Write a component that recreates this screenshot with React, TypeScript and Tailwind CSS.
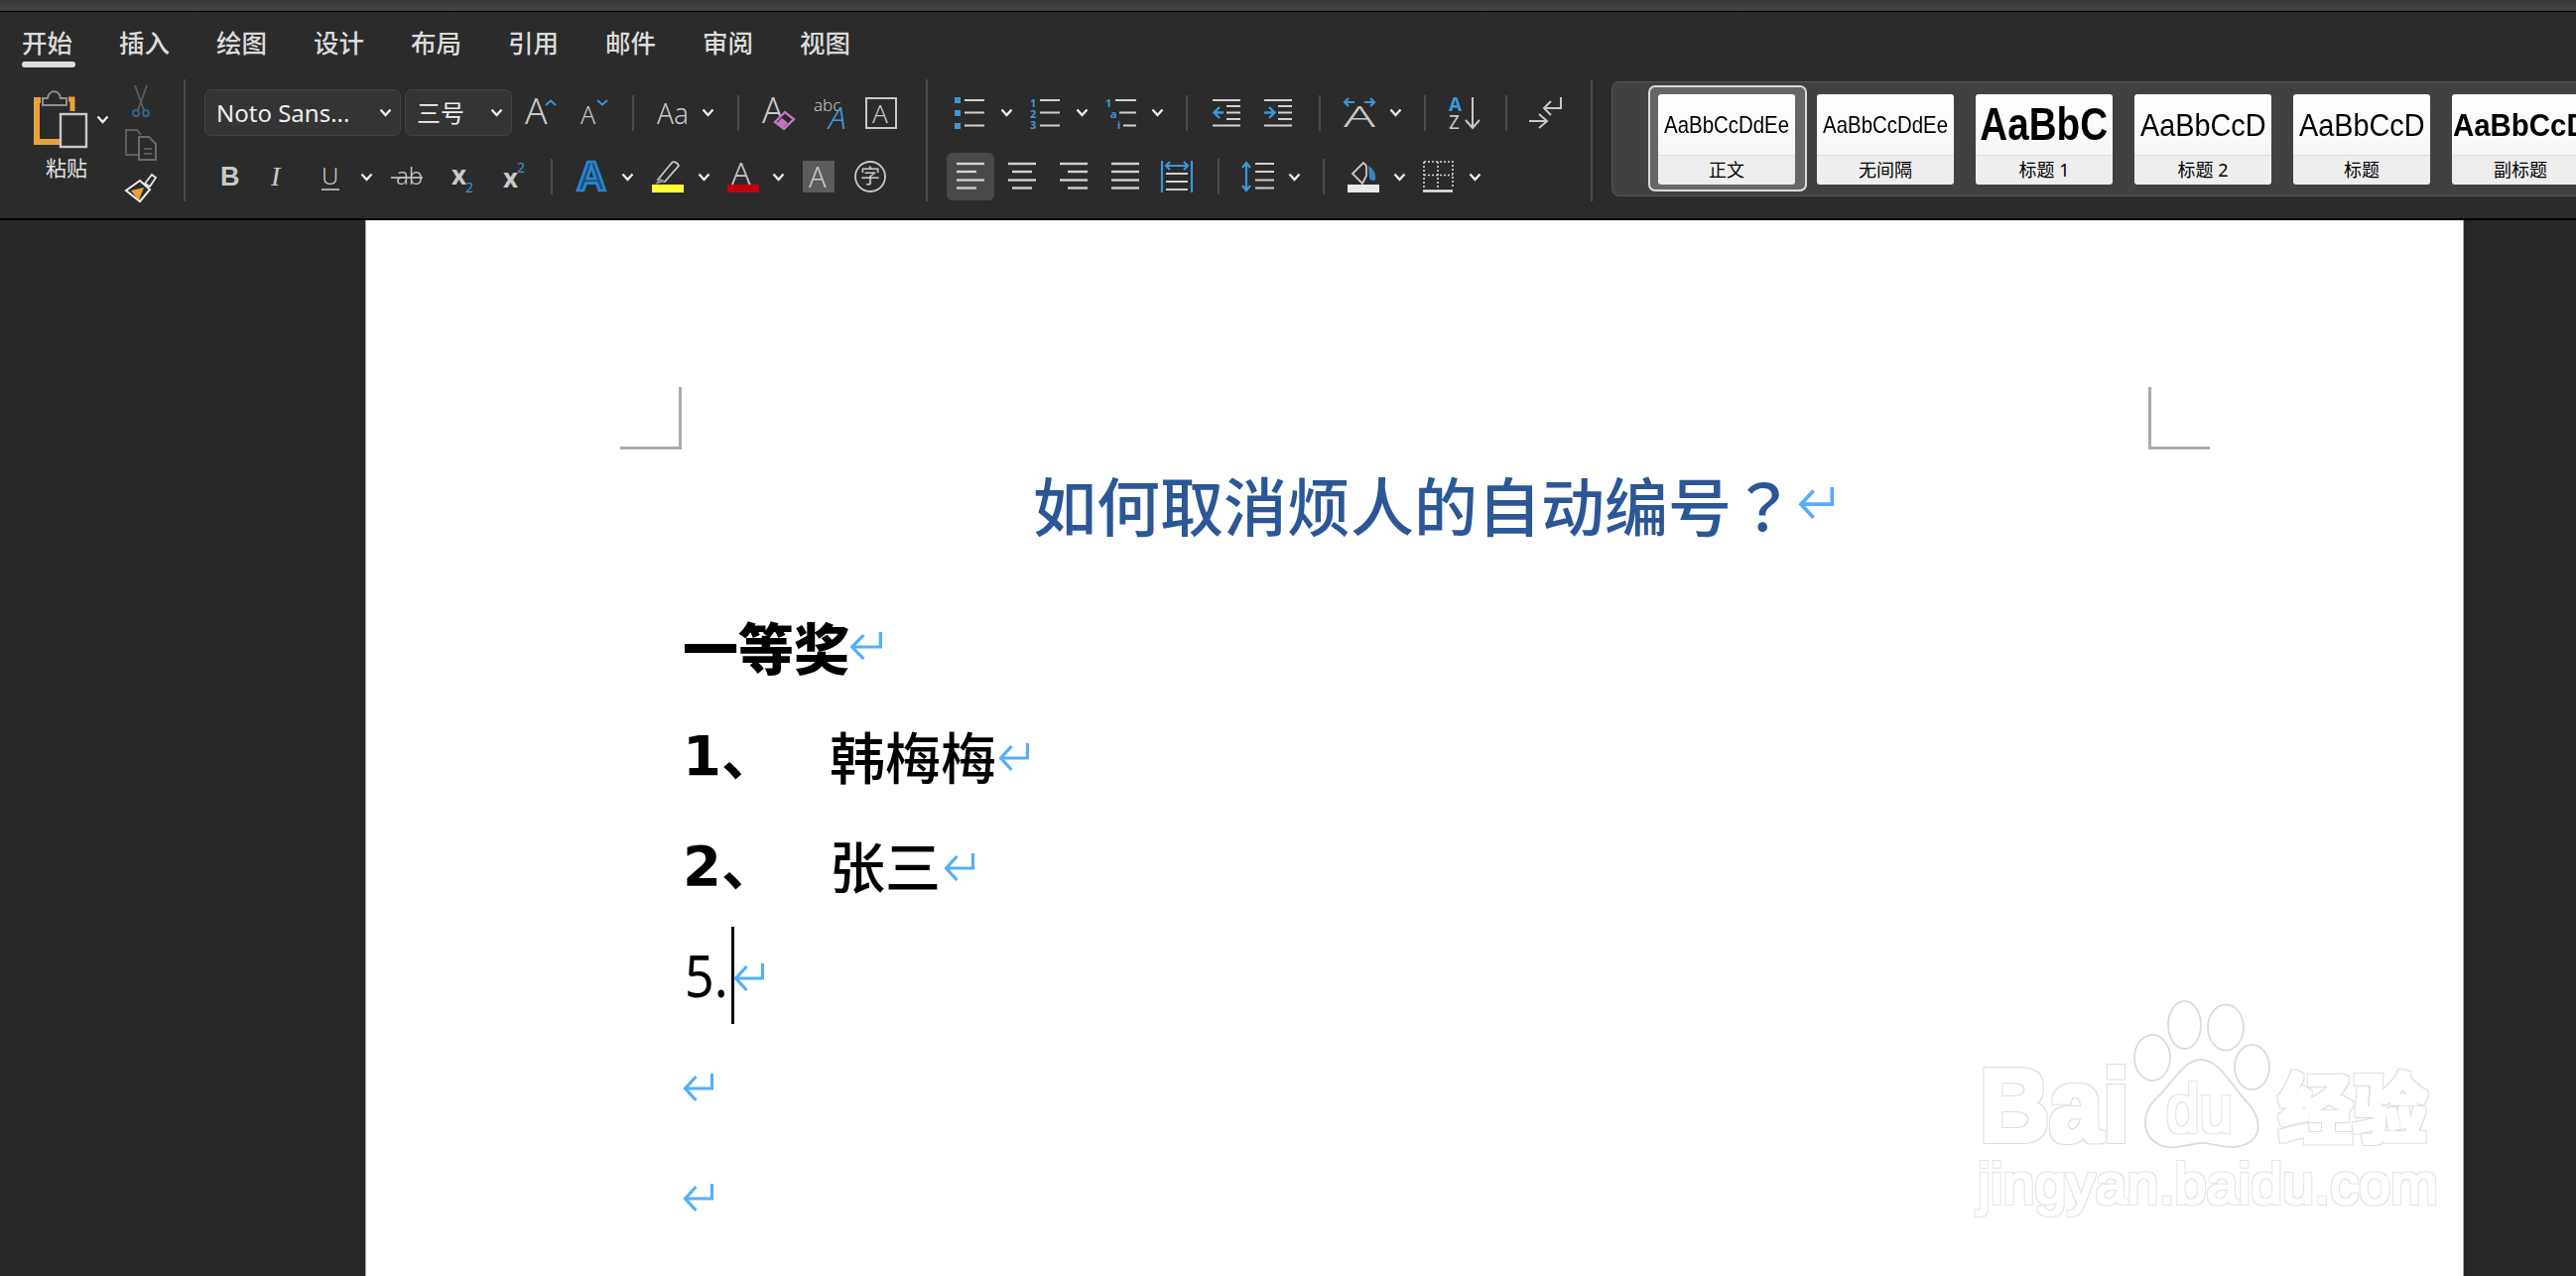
import React from "react";

const G = "#c9c9c9";
const B = "#3b97d8";
const SANS = "'Noto Sans','Noto Sans CJK SC',sans-serif";

function Svg({ w, h, className = "", children }: { w: number; h: number; className?: string; children?: React.ReactNode }) {
  return (
    <svg width={w} height={h} viewBox={`0 0 ${w} ${h}`} fill="none" className={`shrink-0 overflow-visible ${className}`}>
      {children}
    </svg>
  );
}

function T({ x, y, s, fill = G, children, weight = 300, italic, family = SANS, len, stroke, sw }: any) {
  return (
    <text
      x={x}
      y={y}
      fontSize={s}
      fill={fill}
      fontWeight={weight}
      fontStyle={italic ? "italic" : undefined}
      fontFamily={family}
      textLength={len}
      lengthAdjust={len ? "spacingAndGlyphs" : undefined}
      stroke={stroke}
      strokeWidth={sw}
    >
      {children}
    </text>
  );
}

function Chev({ className = "" }: { className?: string }) {
  return (
    <Svg w={13} h={9} className={className}>
      <path d="M1.5 1.5L6.5 7L11.5 1.5" stroke="#ececec" strokeWidth="2.4" />
    </Svg>
  );
}

function Sep({ className = "", h = "h-[36px]" }: { className?: string; h?: string }) {
  return <div className={`w-[2px] shrink-0 bg-[#4c4c4c] ${h} ${className}`} />;
}

function Lines({ xs, w = 28 }: { xs: [number, number][]; w?: number }) {
  const ys = [3, 11, 19.5, 27.5];
  return (
    <Svg w={w} h={32}>
      {xs.map(([a, b], i) => (
        <path key={i} d={`M${a} ${ys[i]}H${b}`} stroke="#d2d2d2" strokeWidth="2.4" />
      ))}
    </Svg>
  );
}

function Enter({ w = 31, h = 28, className = "" }: { w?: number; h?: number; className?: string }) {
  return (
    <svg width={w} height={h} viewBox="0 0 31 28" preserveAspectRatio="none" fill="none" className={`shrink-0 ${className}`}>
      <path d="M29.5 0V15H3M13.5 3L2.5 15L13.5 27" stroke="#54aeff" strokeWidth="3.2" />
    </svg>
  );
}

const tabs = ["开始", "插入", "绘图", "设计", "布局", "引用", "邮件", "审阅", "视图"];

const styles = [
  { t: "AaBbCcDdEe", l: "正文", c: "text-[24px] [transform:scaleX(.85)]", sel: true },
  { t: "AaBbCcDdEe", l: "无间隔", c: "text-[24px] [transform:scaleX(.85)]" },
  { t: "AaBbC", l: "标题 1", c: "text-[46px] font-bold [transform:scaleX(.84)]" },
  { t: "AaBbCcD", l: "标题 2", c: "text-[32px] [transform:scaleX(.9)]" },
  { t: "AaBbCcD", l: "标题", c: "text-[32px] [transform:scaleX(.9)]" },
  { t: "AaBbCcD", l: "副标题", c: "text-[32px] font-bold [transform:scaleX(.92)]" },
];

function ClipSection() {
  return (
    <div className="flex w-[185px] shrink-0">
      <div className="w-[126px] shrink-0 pl-[34px] pt-[10px]">
        <div className="flex items-center">
          <Svg w={54} h={60}>
            <path d="M7 11H3V53H27" stroke="#e8a23c" strokeWidth="6" />
            <path d="M35 10H39V22" stroke="#e8a23c" strokeWidth="5" />
            <path d="M9 16V9H14C15 0 26 0 27 9H33V16Z" stroke="#8f8f8f" strokeWidth="2" fill="#2b2b2b" />
            <rect x="27" y="25" width="26" height="33" stroke="#c8c8c8" strokeWidth="2.4" fill="#2b2b2b" />
          </Svg>
          <Chev className="ml-[9px]" />
        </div>
        <div className="ml-[12px] mt-[7px] text-[21px] leading-[24px] text-[#e2e2e2]">粘贴</div>
      </div>
      <div className="w-[32px] shrink-0 pt-[6px]">
        <Svg w={32} h={32}>
          <path d="M10 0L19 25M22 0L13 25" stroke="#5e5e5e" strokeWidth="1.8" />
          <circle cx="11" cy="28" r="3" stroke="#366384" strokeWidth="2" />
          <circle cx="21" cy="28" r="3" stroke="#366384" strokeWidth="2" />
        </Svg>
        <Svg w={32} h={32} className="mt-[12px]">
          <path d="M13 26H1V1H12L16 6" stroke="#5f5f5f" strokeWidth="2" />
          <path d="M14 8H24L31 15V31H14Z" stroke="#6a6a6a" strokeWidth="2" />
          <path d="M19 20H27M19 25H27" stroke="#6a6a6a" strokeWidth="1.6" />
        </Svg>
        <Svg w={32} h={30} className="mt-[12px]">
          <path d="M20 11L27 2L31 5L25 14Z" stroke="#e4e4e4" strokeWidth="1.8" />
          <path d="M1 18L15 8L25 17L15 29Z" stroke="#efefef" strokeWidth="2" fill="#2b2b2b" />
          <path d="M6 18L19 15L14 28Z" fill="#e8a23c" />
        </Svg>
      </div>
    </div>
  );
}

function FontRow1() {
  return (
    <div className="flex h-[47px] items-center">
      <div className="ml-[19px] flex h-[47px] w-[198px] shrink-0 items-center justify-between rounded-[7px] border border-[#444] bg-[#343434] pl-[11px] pr-[8px] text-[24px] text-[#eee]">
        <span>Noto Sans...</span>
        <Chev />
      </div>
      <div className="ml-[4px] flex h-[47px] w-[108px] shrink-0 items-center justify-between rounded-[7px] border border-[#444] bg-[#343434] pl-[11px] pr-[8px] text-[24px] text-[#eee]">
        <span>三号</span>
        <Chev />
      </div>
      <Svg w={30} h={32} className="ml-[14px]">
        <T x={-1} y={27} s={37}>A</T>
        <path d="M20 8L25 3.5L30 8" stroke={B} strokeWidth="2" />
      </Svg>
      <Svg w={27} h={32} className="ml-[25px]">
        <T x={0} y={27} s={25}>A</T>
        <path d="M17 3L22 7.5L27 3" stroke={B} strokeWidth="2" />
      </Svg>
      <Sep className="ml-[25px]" />
      <Svg w={32} h={32} className="ml-[23px]">
        <T x={0} y={27} s={30} len={32}>Aa</T>
      </Svg>
      <Chev className="ml-[13px]" />
      <Sep className="ml-[23px]" />
      <Svg w={32} h={32} className="ml-[24px]">
        <T x={-1} y={26} s={36}>A</T>
        <path d="M12 25L22 15L31 22L21 32Z" stroke="#c673c6" strokeWidth="2.4" fill="#2b2b2b" />
        <path d="M14 26L19 21L25 26L20 31Z" fill="#c673c6" />
      </Svg>
      <Svg w={33} h={32} className="ml-[19px]">
        <T x={0} y={14} s={17}>abc</T>
        <T x={15} y={32} s={32} fill={B} italic>A</T>
      </Svg>
      <Svg w={32} h={32} className="ml-[19px]">
        <rect x="1" y="1" width="30" height="30" stroke={G} strokeWidth="2" />
        <T x={7} y={26} s={26}>A</T>
      </Svg>
    </div>
  );
}

function FontRow2() {
  return (
    <div className="mt-[17px] flex h-[48px] items-center">
      <Svg w={15} h={32} className="ml-[36px]">
        <T x={-1} y={25} s={27} weight={700} family="'Liberation Sans',sans-serif">B</T>
      </Svg>
      <Svg w={14} h={32} className="ml-[37px]">
        <T x={-2} y={25} s={28} italic family="'Liberation Serif',serif" weight={400}>I</T>
      </Svg>
      <Svg w={18} h={32} className="ml-[35px]">
        <T x={0} y={24} s={24}>U</T>
        <path d="M0 29H18" stroke={G} strokeWidth="1.6" />
      </Svg>
      <Chev className="ml-[21px]" />
      <Svg w={32} h={32} className="ml-[18px]">
        <T x={5} y={24} s={24}>ab</T>
        <path d="M0 17H32" stroke={G} strokeWidth="1.6" />
      </Svg>
      <Svg w={22} h={32} className="ml-[29px]">
        <T x={0} y={24} s={26} weight={700}>x</T>
        <T x={14} y={32} s={14} fill={B} weight={400}>2</T>
      </Svg>
      <Svg w={22} h={32} className="ml-[30px]">
        <T x={0} y={27} s={26} weight={700}>x</T>
        <T x={14} y={12} s={14} fill={B} weight={400}>2</T>
      </Svg>
      <Sep className="ml-[26px]" />
      <Svg w={32} h={32} className="ml-[23px]">
        <T x={1} y={30} s={42} weight={700} fill="#1b507d" stroke="#2b84cf" sw={2.6} family="'Liberation Sans',sans-serif" len={30}>A</T>
      </Svg>
      <Chev className="ml-[14px]" />
      <Svg w={32} h={32} className="ml-[18px]">
        <path d="M6 19L20 2C22 0 26 2 27 5L13 21Z" stroke={G} strokeWidth="1.8" />
        <path d="M3 24L8 17L13 21Z" fill="#8a8a8a" />
        <rect x="0" y="24" width="32" height="8" fill="#ffff33" />
      </Svg>
      <Chev className="ml-[14px]" />
      <Svg w={32} h={32} className="ml-[17px]">
        <T x={4} y={24} s={32}>A</T>
        <rect x="0" y="24" width="32" height="8" fill="#c00010" />
      </Svg>
      <Chev className="ml-[13px]" />
      <Svg w={32} h={32} className="ml-[18px]">
        <rect width="32" height="32" fill="#5c5c5c" />
        <T x={6} y={27} s={29}>A</T>
      </Svg>
      <Svg w={32} h={32} className="ml-[20px]">
        <circle cx="16" cy="16" r="15" stroke={G} strokeWidth="1.8" />
        <T x={6} y={23} s={20} weight={400}>字</T>
      </Svg>
    </div>
  );
}

function ParaRow1() {
  const L = ({ d }: { d: string }) => <path d={d} stroke="#d2d2d2" strokeWidth="2.2" />;
  return (
    <div className="flex h-[47px] items-center">
      <Svg w={30} h={32} className="ml-[27px]">
        <rect x="0" y="0" width="6" height="6" fill={B} />
        <rect x="0" y="13" width="6" height="6" fill={B} />
        <rect x="0" y="26" width="6" height="6" fill={B} />
        <L d="M10 3H30M10 15.5H30M10 28.5H30" />
      </Svg>
      <Chev className="ml-[16px]" />
      <Svg w={30} h={32} className="ml-[17px]">
        <T x={0} y={10} s={11} fill={B} weight={700}>1</T>
        <T x={0} y={21} s={11} fill={B} weight={700}>2</T>
        <T x={0} y={32} s={11} fill={B} weight={700}>3</T>
        <L d="M10 3H30M10 15.5H30M10 28.5H30" />
      </Svg>
      <Chev className="ml-[16px]" />
      <Svg w={31} h={32} className="ml-[17px]">
        <T x={0} y={10} s={11} fill={B} weight={700}>1</T>
        <T x={5} y={21} s={11} fill={B} weight={700}>a</T>
        <T x={12} y={32} s={11} fill={B} weight={700}>i</T>
        <L d="M10 3H31M14 15.5H31M18 28.5H31" />
      </Svg>
      <Chev className="ml-[15px]" />
      <Sep className="ml-[22px]" />
      <Svg w={28} h={32} className="ml-[25px]">
        <L d="M0 3H28M14 15.5H28M0 28.5H28M14 9H28M14 22H28" />
        <path d="M11 15.5H2M7 10L1.5 15.5L7 21" stroke={B} strokeWidth="2.4" />
      </Svg>
      <Svg w={28} h={32} className="ml-[24px]">
        <L d="M0 3H28M14 15.5H28M0 28.5H28M14 9H28M14 22H28" />
        <path d="M0 15.5H9M5 10L10.5 15.5L5 21" stroke={B} strokeWidth="2.4" />
      </Svg>
      <Sep className="ml-[27px]" />
      <Svg w={32} h={32} className="ml-[23px]">
        <T x={0} y={30} s={30} len={32}>A</T>
        <path d="M11 5H1M5 1L1 5L5 9M21 5H31M27 1L31 5L27 9" stroke={B} strokeWidth="2.2" />
      </Svg>
      <Chev className="ml-[14px]" />
      <Sep className="ml-[22px]" />
      <Svg w={33} h={32} className="ml-[23px]">
        <T x={0} y={14} s={19} fill={B} weight={700}>A</T>
        <T x={0} y={32} s={19} weight={400}>Z</T>
        <path d="M24 0V30M17 23L24 31L31 23" stroke={G} strokeWidth="2" />
      </Svg>
      <Sep className="ml-[24px]" />
      <Svg w={33} h={32} className="ml-[22px]">
        <path d="M32 0V11H15M22 4L15 11L22 18" stroke={G} strokeWidth="2" />
        <path d="M0 24H17M10 17L18 24L10 31" stroke={G} strokeWidth="2" />
      </Svg>
    </div>
  );
}

function ParaRow2() {
  return (
    <div className="mt-[17px] flex h-[48px] items-center">
      <div className="ml-[19px] flex h-[48px] w-[48px] shrink-0 items-center justify-center rounded-[6px] bg-[#494949]">
        <Lines xs={[[0, 28], [0, 20], [0, 28], [0, 20]]} />
      </div>
      <div className="ml-[14px]"><Lines xs={[[0, 28], [4, 24], [0, 28], [4, 24]]} /></div>
      <div className="ml-[24px]"><Lines xs={[[0, 28], [8, 28], [0, 28], [8, 28]]} /></div>
      <div className="ml-[24px]"><Lines xs={[[0, 28], [0, 28], [0, 28], [0, 28]]} /></div>
      <Svg w={32} h={32} className="ml-[22px]">
        <path d="M1 0V32M31 0V32" stroke={B} strokeWidth="2.2" />
        <path d="M5 5H27M9 1L5 5L9 9M23 1L27 5L23 9" stroke={B} strokeWidth="2.2" />
        <path d="M5 13H27M5 21H27M5 29H27" stroke="#d2d2d2" strokeWidth="2.2" />
      </Svg>
      <Sep className="ml-[25px]" />
      <Svg w={33} h={32} className="ml-[22px]">
        <path d="M5 2V30M1 7L5 2L9 7M1 25L5 30L9 25" stroke={B} strokeWidth="2.2" />
        <path d="M14 3H33M14 11H33M14 19.5H33M14 27.5H33" stroke="#d2d2d2" strokeWidth="2.2" />
      </Svg>
      <Chev className="ml-[14px]" />
      <Sep className="ml-[22px]" />
      <Svg w={32} h={32} className="ml-[23px]">
        <path d="M5 13L16 2L19 5V15L15 23Z" stroke={G} strokeWidth="1.8" />
        <path d="M21 5C26 8 29 13 28 19C26 21 23 20 22 17Z" fill={B} opacity=".85" />
        <rect x="0" y="24" width="32" height="8" fill="#e8e8e8" />
      </Svg>
      <Chev className="ml-[14px]" />
      <Svg w={30} h={32} className="ml-[17px]">
        <path d="M1 1H30V28M1 1V28M1 14.5H30M15 1V28" stroke="#d8d8d8" strokeWidth="1.6" strokeDasharray="2 2" />
        <path d="M0 30.5H30" stroke="#f0f0f0" strokeWidth="2.4" />
      </Svg>
      <Chev className="ml-[16px]" />
    </div>
  );
}

function Watermark() {
  const paw = { stroke: "#dcdcdc", strokeWidth: 1.8, fill: "#fff" };
  return (
    <svg
      width={480}
      height={235}
      viewBox="1985 1000 480 235"
      className="absolute left-[1616px] top-[778px] blur-[0.5px]"
    >
      <defs>
        <filter id="ring-a" x="-10%" y="-20%" width="120%" height="140%">
          <feMorphology in="SourceAlpha" operator="dilate" radius="3" result="a" />
          <feMorphology in="SourceAlpha" operator="dilate" radius="2" result="b" />
          <feComposite in="a" in2="b" operator="out" result="r" />
          <feFlood floodColor="#dedede" />
          <feComposite in2="r" operator="in" />
        </filter>
        <filter id="ring-b" x="-10%" y="-20%" width="120%" height="140%">
          <feMorphology in="SourceAlpha" operator="dilate" radius="2" result="a" />
          <feMorphology in="SourceAlpha" operator="dilate" radius="1" result="b" />
          <feComposite in="a" in2="b" operator="out" result="r" />
          <feFlood floodColor="#e4e4e4" />
          <feComposite in2="r" operator="in" />
        </filter>
      </defs>
      <g {...paw}>
        <ellipse cx="2201.5" cy="1033" rx="16.5" ry="24" />
        <ellipse cx="2243" cy="1035.5" rx="18" ry="23" />
        <ellipse cx="2169" cy="1066" rx="18" ry="23" />
        <ellipse cx="2269.5" cy="1075.5" rx="17.5" ry="22.5" />
        <path d="M2218 1068C2236 1068 2246 1090 2262 1108C2280 1126 2282 1148 2258 1155C2240 1159 2226 1150 2216 1152C2202 1154 2188 1160 2175 1153C2158 1144 2158 1122 2172 1108C2190 1092 2200 1068 2218 1068Z" />
      </g>
      <text filter="url(#ring-a)" x="1995" y="1150" fontSize="104" fontWeight="700" fontFamily="'Liberation Sans',sans-serif" textLength="151" lengthAdjust="spacingAndGlyphs" fill="#000">Bai</text>
      <text filter="url(#ring-b)" x="2183" y="1141" fontSize="68" fontWeight="400" fontFamily="'Liberation Sans',sans-serif" textLength="67" lengthAdjust="spacingAndGlyphs" fill="#000">du</text>
      <text filter="url(#ring-a)" x="2296" y="1146" fontSize="76" fontWeight="700" fontFamily="'Noto Sans CJK SC',sans-serif" textLength="150" lengthAdjust="spacingAndGlyphs" fill="#000">经验</text>
      <text filter="url(#ring-b)" x="1993" y="1213" fontSize="58" fontWeight="400" fontFamily="'Liberation Sans',sans-serif" textLength="464" lengthAdjust="spacingAndGlyphs" fill="#000">jingyan.baidu.com</text>
    </svg>
  );
}

export default function App() {
  return (
    <div className="h-[1286px] w-[2596px] overflow-hidden bg-[#282828] font-['Noto_Sans','Noto_Sans_CJK_SC',sans-serif]">
      <div className="h-[11px] bg-gradient-to-b from-[#383838] to-[#444444]" />
      <div className="h-[1px] bg-black" />
      <div className="h-[208px] overflow-hidden bg-[#2b2b2b]">
        <div className="flex h-[68px] gap-[47px] pl-[22px] pt-[12px]">
          {tabs.map((t, i) => (
            <div key={t} className="w-[51px] shrink-0">
              <div className="h-[38px] whitespace-nowrap text-[25.5px] font-medium leading-[38px] text-[#dcdcdc]">{t}</div>
              {i === 0 && <div className="h-[6px] w-[54px] rounded-full bg-[#dcdcdc]" />}
            </div>
          ))}
        </div>
        <div className="flex h-[123px]">
          <ClipSection />
          <Sep h="h-[123px]" />
          <div className="w-[746px] shrink-0 pt-[10px]">
            <FontRow1 />
            <FontRow2 />
          </div>
          <Sep h="h-[123px]" />
          <div className="w-[668px] shrink-0 pt-[10px]">
            <ParaRow1 />
            <ParaRow2 />
          </div>
          <Sep h="h-[123px]" />
          <div className="ml-[19px] mt-[2px] flex h-[116px] grow rounded-l-[8px] border border-r-0 border-[#555] bg-[#414141] pl-[36px] pt-[3px]">
            {styles.map((s, i) => (
              <div
                key={i}
                className={
                  s.sel
                    ? "h-[107px] w-[160px] shrink-0 rounded-[7px] border-2 border-[#dadada] bg-[#666666] pl-[8px] pt-[7px]"
                    : "h-[107px] w-[160px] shrink-0 pl-[10px] pt-[9px]"
                }
              >
                <div className="flex h-[91px] w-[138px] flex-col overflow-hidden rounded-[3px]">
                  <div className="flex h-[61px] items-center justify-center overflow-hidden bg-gradient-to-b from-white to-[#f6f6f6]">
                    <span className={`whitespace-nowrap font-['Liberation_Sans',sans-serif] text-black ${s.c}`}>{s.t}</span>
                  </div>
                  <div className="h-[30px] border-t border-[#dfdfdf] bg-[#eeeeee] text-center text-[18px] leading-[29px] text-black">{s.l}</div>
                </div>
              </div>
            ))}
          </div>
        </div>
      </div>
      <div className="h-[2px] bg-black" />
      <div className="pl-[368px]">
        <div className="relative h-[1064px] w-[2115px] overflow-hidden border-x border-[#a8a8a8] bg-white pl-[256px] pr-[255px] pt-[168px]">
          <div className="flex justify-between">
            <div className="h-[63px] w-[62px] border-b-[3px] border-r-[3px] border-[#aaaaaa]" />
            <div className="h-[63px] w-[62px] border-b-[3px] border-l-[3px] border-[#aaaaaa]" />
          </div>
          <div className="ml-[416px] mt-[7px] flex h-[94px] items-center text-[64px] font-medium text-[#2b5797]">
            <span className="whitespace-nowrap font-['Noto_Sans_CJK_SC',sans-serif]">如何取消烦人的自动编号</span>
            <span className="font-['Noto_Sans_CJK_TC',sans-serif]">？</span>
            <Enter w={36} h={32} className="ml-[3px]" />
          </div>
          <div className="ml-[63px] mt-[47px] flex h-[100px] items-center text-[56px] font-black text-black">
            <span className="whitespace-nowrap font-['Noto_Sans_CJK_SC',sans-serif]">一等奖</span>
            <Enter w={33} h={28} />
          </div>
          <div className="ml-[63px] mt-[6px] flex h-[111px] items-center text-[56px] text-black">
            <span className="mt-[-2px] w-[148px] shrink-0 whitespace-nowrap font-['DejaVu_Sans','Noto_Sans_CJK_SC',sans-serif] font-bold">1、</span>
            <span className="mt-[-3px] whitespace-nowrap font-['Noto_Sans_CJK_SC',sans-serif] font-medium">韩梅梅</span>
            <Enter className="ml-[2px]" />
          </div>
          <div className="ml-[63px] flex h-[111px] items-center text-[56px] text-black">
            <span className="mt-[-2px] w-[148px] shrink-0 whitespace-nowrap font-['DejaVu_Sans','Noto_Sans_CJK_SC',sans-serif] font-bold">2、</span>
            <span className="mt-[-5px] whitespace-nowrap font-['Noto_Sans_CJK_SC',sans-serif] font-medium">张三</span>
            <Enter className="ml-[3px]" />
          </div>
          <div className="ml-[65px] flex h-[111px] items-center text-[52px] text-black">
            <span className="mt-[-6px] whitespace-nowrap [transform:scaleY(1.14)]">5.</span>
            <div className="ml-[3px] mt-[-4px] h-[98px] w-[3px] shrink-0 bg-black" />
            <Enter className="ml-[-1px]" />
          </div>
          <div className="ml-[63px] flex h-[111px] items-center">
            <Enter />
          </div>
          <div className="ml-[63px] flex h-[111px] items-center">
            <Enter />
          </div>
          <Watermark />
        </div>
      </div>
    </div>
  );
}
